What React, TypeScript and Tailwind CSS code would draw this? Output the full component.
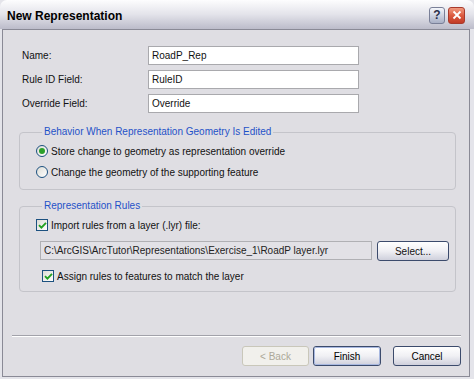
import React from 'react'

const Radio = ({ checked }: { checked?: boolean }) => (
  <span className="w-[12px] h-[12px] shrink-0 rounded-full border border-[#1c5180] bg-gradient-to-br from-[#dcdcd6] to-white flex items-center justify-center">
    {checked && <span className="w-[6px] h-[6px] rounded-full bg-[#2aa02a]" />}
  </span>
)

const Check = () => (
  <span className="w-[12px] h-[12px] shrink-0 border border-[#1c5180] bg-gradient-to-br from-[#dcdcd6] to-white flex items-center justify-center">
    <svg width="9" height="9" viewBox="0 0 9 9">
      <path d="M1 4.2 L3.4 6.6 L8 1.8" fill="none" stroke="#21a121" strokeWidth="1.9" />
    </svg>
  </span>
)

const Btn = ({ label, kind }: { label: string; kind?: 'default' | 'disabled' }) => {
  if (kind === 'disabled') {
    return (
      <div className="w-[67px] h-[20px] rounded-[3px] border border-[#c9c7ba] bg-[#f1f0ec] flex items-center justify-center text-[#aca899]">
        {label}
      </div>
    )
  }
  return (
    <div className="w-[68px] h-[20px] rounded-[3px] border border-[#3c4b6c] bg-gradient-to-b from-white via-[#f0f0f4] to-[#cfd0dc] flex items-center justify-center text-black">
      <div
        className={
          kind === 'default'
            ? 'w-full h-full rounded-[2px] border border-[#a8b8e0] flex items-center justify-center'
            : 'w-full h-full flex items-center justify-center'
        }
      >
        {label}
      </div>
    </div>
  )
}

const fields = [
  { label: 'Name:', value: 'RoadP_Rep' },
  { label: 'Rule ID Field:', value: 'RuleID' },
  { label: 'Override Field:', value: 'Override' },
]

export default function App() {
  return (
    <div className="w-[474px] h-[379px] bg-[#e4e4ea] overflow-hidden font-['Liberation_Sans',Arial,sans-serif] text-[10px] text-[#111]">
      {/* title bar */}
      <div className="h-[29px] rounded-t-[7px] bg-gradient-to-b from-[#fdfdfe] via-[#e3e3ea] to-[#bcbcca] flex items-center pl-[7px] pr-[9px]">
        <span className="text-[12px] font-bold text-black pt-[2px]">New Representation</span>
        <div className="ml-auto flex items-center gap-[3px] pt-[1px]">
          <div className="w-[16px] h-[17px] rounded-[3px] border border-[#7a8098] bg-gradient-to-b from-[#f4f6fb] to-[#a9b0c6] flex items-center justify-center text-[12px] font-bold text-[#2a2f4a]">
            ?
          </div>
          <div className="w-[17px] h-[17px] rounded-[3px] border border-[#a83a2c] bg-gradient-to-b from-[#f09a80] via-[#dc5a40] to-[#c23a26] flex items-center justify-center">
            <svg width="10" height="10" viewBox="0 0 10 10">
              <path d="M1.5 1.5 L8.5 8.5 M8.5 1.5 L1.5 8.5" stroke="white" strokeWidth="1.8" />
            </svg>
          </div>
        </div>
      </div>

      {/* body */}
      <div className="ml-[2px] w-[468px] h-[348px] border border-[#8a8a96] bg-[#dfdee3] flex flex-col">
        <div className="mt-[16px] ml-[19px] grid grid-cols-[126px_211px] gap-y-[5px] items-center">
          {fields.map((f, i) => (
            <React.Fragment key={i}>
              <span>{f.label}</span>
              <div className="h-[19px] border border-[#a9a9ad] bg-white flex items-center pl-[3px]">{f.value}</div>
            </React.Fragment>
          ))}
        </div>

        <fieldset className="mt-[12px] ml-[16px] w-[437px] rounded-[4px] border border-[#c4c4ca] pl-[16px] pt-[4px] pb-[9px] flex flex-col gap-[5px]">
          <legend className="ml-[6px] px-[2px] text-[#1f52c8] leading-[14px]">
            Behavior When Representation Geometry Is Edited
          </legend>
          <div className="h-[16px] flex items-center gap-[3px]">
            <Radio checked />
            <span>Store change to geometry as representation override</span>
          </div>
          <div className="h-[16px] flex items-center gap-[3px]">
            <Radio />
            <span>Change the geometry of the supporting feature</span>
          </div>
        </fieldset>

        <fieldset className="mt-[9px] ml-[16px] w-[437px] rounded-[4px] border border-[#c4c4ca] pl-[16px] pt-[4px] pb-[7px] flex flex-col">
          <legend className="ml-[6px] px-[2px] text-[#1f52c8] leading-[14px]">Representation Rules</legend>
          <div className="h-[16px] flex items-center gap-[3px]">
            <Check />
            <span>Import rules from a layer (.lyr) file:</span>
          </div>
          <div className="mt-[6px] ml-[4px] flex items-center gap-[5px]">
            <div className="w-[332px] h-[19px] border border-[#b0b0b4] bg-[#e2e1e6] flex items-center pl-[3px] text-[#222]">
              C:\ArcGIS\ArcTutor\Representations\Exercise_1\RoadP layer.lyr
            </div>
            <div className="mt-[2px] w-[72px] h-[20px] rounded-[3px] border border-[#3c4b6c] bg-gradient-to-b from-white via-[#f0f0f4] to-[#cfd0dc] flex items-center justify-center">
              Select...
            </div>
          </div>
          <div className="mt-[7px] ml-[6px] h-[16px] flex items-center gap-[3px]">
            <Check />
            <span>Assign rules to features to match the layer</span>
          </div>
        </fieldset>

        <div className="mt-[43px] ml-[9px] w-[449px] border-t border-[#a2a2aa] border-b border-b-white" />

        <div className="mt-[9px] pr-[8px] flex justify-end">
          <Btn label="< Back" kind="disabled" />
          <div className="ml-[4px]">
            <Btn label="Finish" kind="default" />
          </div>
          <div className="ml-[12px]">
            <Btn label="Cancel" />
          </div>
        </div>
      </div>
    </div>
  )
}
